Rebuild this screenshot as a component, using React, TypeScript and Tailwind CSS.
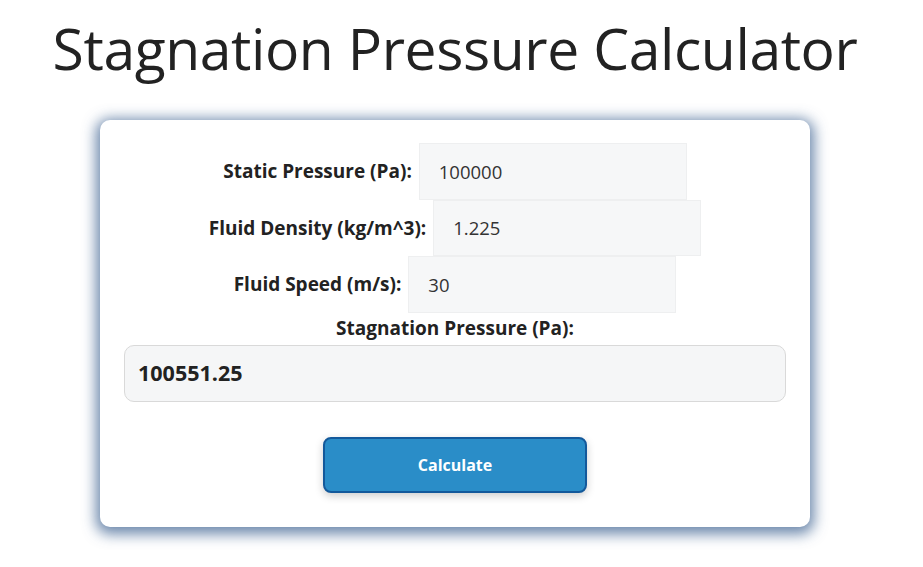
import React from "react";

type FieldProps = {
  label: string;
  value: string;
};

const Field: React.FC<FieldProps> = ({ label, value }) => (
  <div className="flex items-center justify-center gap-[7px]">
    <label className="text-[19px] font-bold text-[#222]">{label}</label>
    <input
      type="text"
      defaultValue={value}
      className="w-[268px] h-[56.5px] px-[19px] bg-[#f6f7f8] border border-[#eeeff0] text-[18.5px] text-[#333] outline-none"
    />
  </div>
);

export default function App() {
  return (
    <div
      className="min-h-screen bg-white flex flex-col items-center pt-[14px] pr-[13px]"
      style={{ fontFamily: "'Open Sans', 'Noto Sans', sans-serif" }}
    >
      <h1 className="text-[57px] leading-[68px] text-[#222] font-normal tracking-[-0.4px]">
        Stagnation Pressure Calculator
      </h1>
      <div className="mt-[38px] w-[710px] bg-white rounded-[10px] px-6 pt-[23px] pb-[34px] shadow-[0_3px_14px_4px_rgba(70,105,150,0.8)] flex flex-col">
        <Field label="Static Pressure (Pa):" value="100000" />
        <Field label="Fluid Density (kg/m^3):" value="1.225" />
        <Field label="Fluid Speed (m/s):" value="30" />
        <div className="text-center text-[19px] font-bold text-[#222] mt-[2px] leading-[26px]">
          Stagnation Pressure (Pa):
        </div>
        <div className="mt-[4px] h-[57px] rounded-[10px] bg-[#f5f6f7] border border-[#d9d9d9] flex items-center px-[13px] text-[21.5px] font-bold text-[#222]">
          100551.25
        </div>
        <div className="flex justify-center mt-[35px]">
          <button className="w-[264px] h-[56px] rounded-[8px] bg-[#2a8dc8] border-2 border-[#13599b] text-white text-[16px] font-bold shadow-[0_3px_8px_rgba(0,0,0,0.2)]">
            Calculate
          </button>
        </div>
      </div>
    </div>
  );
}
